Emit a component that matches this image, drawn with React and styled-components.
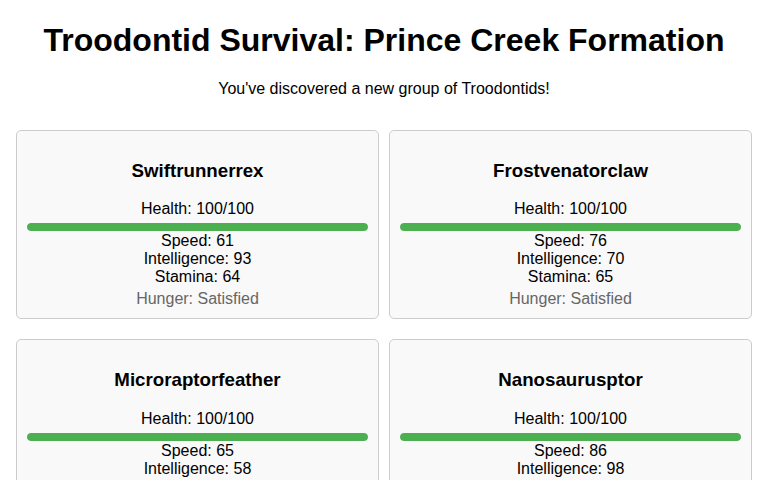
import React from "react";
import styled, { createGlobalStyle } from "styled-components";

const Global = createGlobalStyle`
body {
  margin: 0;
  background: #fff;
  font-family: "Liberation Sans", Arial, sans-serif;
  color: #000;
}
`;

const troodontids = [
  { name: "Swiftrunnerrex", health: 100, speed: 61, intelligence: 93, stamina: 64 },
  { name: "Frostvenatorclaw", health: 100, speed: 76, intelligence: 70, stamina: 65 },
  { name: "Microraptorfeather", health: 100, speed: 65, intelligence: 58, stamina: 61 },
  { name: "Nanosaurusptor", health: 100, speed: 86, intelligence: 98, stamina: 64 },
];

const Card = ({ dino }) => (
  <CardBox>
    <Name>{dino.name}</Name>
    <Line>Health: {dino.health}/100</Line>
    <Bar>
      <Fill style={{ width: `${dino.health}%` }} />
    </Bar>
    <Line>Speed: {dino.speed}</Line>
    <Line>Intelligence: {dino.intelligence}</Line>
    <Line>Stamina: {dino.stamina}</Line>
    <Hunger>Hunger: Satisfied</Hunger>
  </CardBox>
);

const App = () => {
  return (
    <>
      <Global />
      <Container>
        <Title>Troodontid Survival: Prince Creek Formation</Title>
        <Intro>You've discovered a new group of Troodontids!</Intro>
        <Grid>
          {troodontids.map((d) => (
            <Card key={d.name} dino={d} />
          ))}
        </Grid>
      </Container>
    </>
  );
};

export default App;

const Container = styled.div`
  padding: 0 16px 16px;
  text-align: center;
`;

const Title = styled.h1`
  font-size: 32px;
  font-weight: bold;
  margin: 0;
  padding-top: 21.5px;
  line-height: normal;
`;

const Intro = styled.p`
  font-size: 16px;
  margin: 21.5px 0 0;
  line-height: normal;
`;

const Grid = styled.div`
  display: grid;
  grid-template-columns: 1fr 1fr;
  column-gap: 10px;
  row-gap: 20px;
  margin-top: 32px;
`;

const CardBox = styled.div`
  background: #f9f9f9;
  border: 1px solid #ccc;
  border-radius: 5px;
  padding: 10px;
`;

const Name = styled.h3`
  font-size: 18.72px;
  font-weight: bold;
  margin: 18.72px 0;
  line-height: normal;
`;

const Line = styled.div`
  font-size: 16px;
  line-height: normal;
`;

const Bar = styled.div`
  height: 8px;
  margin: 5px 0 1px;
  border-radius: 4px;
  background: #ddd;
  overflow: hidden;
`;

const Fill = styled.div`
  height: 100%;
  background: #4caf50;
  border-radius: 4px;
`;

const Hunger = styled.div`
  font-size: 16px;
  line-height: normal;
  color: #666;
  margin-top: 4px;
`;
